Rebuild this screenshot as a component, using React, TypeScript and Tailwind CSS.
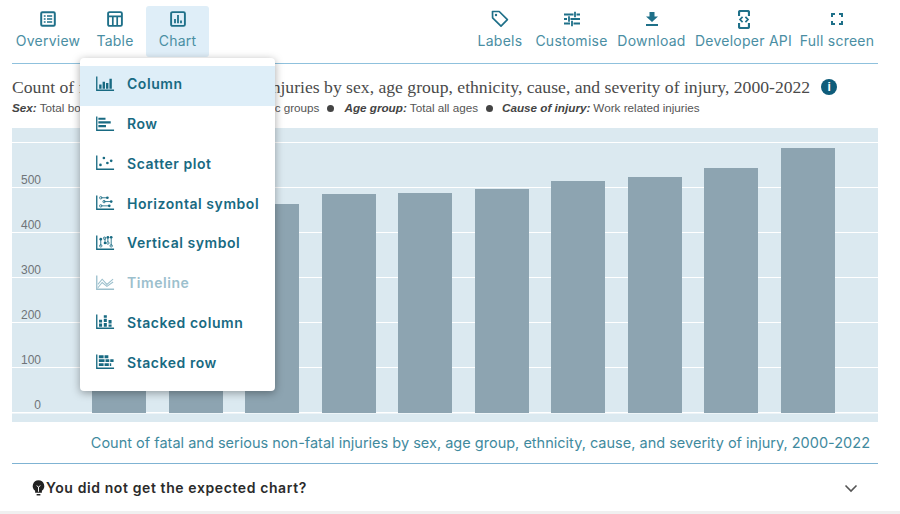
import React from "react";

const S = ({ children, w = 18, h = 18, vb = "0 0 18 18", cls = "" }: any) => (
  <svg width={w} height={h} viewBox={vb} className={cls} fill="none">{children}</svg>
);

const navC = "#1f7089";
const OverviewIcon = () => (
  <S w={16} h={16} vb="0 0 16 16">
    <rect x="1.2" y="1.2" width="13.6" height="13.6" rx="1.2" stroke={navC} strokeWidth="2" />
    <path d="M3.8 5h1.8M3.8 8h1.8M3.8 11h1.8M7 5h5.2M7 8h5.2M7 11h5.2" stroke={navC} strokeWidth="1.6" />
  </S>
);
const TableIcon = () => (
  <S w={16} h={16} vb="0 0 16 16">
    <rect x="1.1" y="1.1" width="13.8" height="13.8" rx="1.4" stroke={navC} strokeWidth="1.9" />
    <path d="M1 5.4h14M5.8 5.4V15M10.2 5.4V15" stroke={navC} strokeWidth="1.7" />
  </S>
);
const ChartIcon = () => (
  <S w={16} h={16} vb="0 0 16 16">
    <rect x="1.1" y="1.1" width="13.8" height="13.8" rx="1.4" stroke={navC} strokeWidth="1.9" />
    <path d="M5 12.2V8M8 12.2V4M11 12.2V9.5" stroke={navC} strokeWidth="1.8" />
  </S>
);
const LabelIcon = () => (
  <S w={18} h={18} vb="0 0 18 18">
    <path d="M1.5 1.5h6.7l8.2 8.2-6.4 6.4-8.4-8.3z" stroke={navC} strokeWidth="1.7" strokeLinejoin="round" />
    <circle cx="5" cy="5" r="1.2" fill={navC} />
  </S>
);
const SlidersIcon = () => (
  <S w={16} h={16} vb="0 0 16 16">
    <path d="M0 3.5h9.5M12.5 3.5H16M0 8h3M6.5 8H16M0 12.5h6M9.5 12.5H16M11 .8v5.4M5 5.3v5.4M8 9.8v5.4" stroke={navC} strokeWidth="1.8" />
  </S>
);
const DownloadIcon = () => (
  <S w={14} h={14} vb="0 0 14 14">
    <path d="M4.5 0h5v4.5H13L7 10 1 4.5h3.5z" fill={navC} />
    <rect x="1" y="12" width="12" height="2" fill={navC} />
  </S>
);
const ApiIcon = () => (
  <S w={12} h={19} vb="0 0 12 19">
    <path d="M1 6V2.5A1.5 1.5 0 0 1 2.5 1h7A1.5 1.5 0 0 1 11 2.5V6M1 13v3.5A1.5 1.5 0 0 0 2.5 18h7a1.5 1.5 0 0 0 1.5-1.5V13" stroke={navC} strokeWidth="2.2" />
    <path d="M4.6 6.8 2 9.5l2.6 2.7M7.4 6.8 10 9.5l-2.6 2.7" stroke={navC} strokeWidth="1.7" />
  </S>
);
const FullIcon = () => (
  <S w={12} h={12} vb="0 0 12 12">
    <path d="M1 4V1h3M8 1h3v3M11 8v3H8M4 11H1V8" stroke={navC} strokeWidth="2" />
  </S>
);

const axis = "M.8 0v14.6H19";
const MI = ({ c, children }: { c: string; children?: React.ReactNode }) => (
  <S w={20} h={16} vb="0 0 20 16">
    <path d={axis} stroke={c} strokeWidth="1.4" />
    {children}
  </S>
);
const menuIcons: Record<string, (c: string) => React.ReactNode> = {
  Column: (c) => (
    <MI c={c}>
      <path d="M4.6 13V8.5M8.2 13V5.5M11.8 13V7M15.4 13V2.5" stroke={c} strokeWidth="2.5" />
    </MI>
  ),
  Row: (c) => (
    <MI c={c}>
      <path d="M2.5 2.5h7.5M2.5 6.3h13M2.5 10.2h8" stroke={c} strokeWidth="2.3" />
    </MI>
  ),
  "Scatter plot": (c) => (
    <MI c={c}>
      {[[8.3, 2.7], [4.7, 10], [12, 8], [16, 5.7]].map(([x, y]) => (
        <circle key={x} cx={x} cy={y} r="1.4" fill={c} />
      ))}
    </MI>
  ),
  "Horizontal symbol": (c) => (
    <MI c={c}>
      <path d="M5 2.5h7M8 6.5h8M5 11h9" stroke={c} strokeWidth="0.9" />
      <circle cx="5" cy="2.5" r="1.3" stroke={c} strokeWidth="0.8" />
      <circle cx="12" cy="2.5" r="1.4" fill={c} />
      <circle cx="8.5" cy="6.5" r="1.3" stroke={c} strokeWidth="0.8" />
      <circle cx="16" cy="6.5" r="1.4" fill={c} />
      <circle cx="5" cy="11" r="1.3" stroke={c} strokeWidth="0.8" />
      <circle cx="14" cy="11" r="1.4" fill={c} />
    </MI>
  ),
  "Vertical symbol": (c) => (
    <MI c={c}>
      <path d="M5 3v8M9.5 2v5M12.5 2v5M16 3v8" stroke={c} strokeWidth="0.9" />
      <circle cx="5" cy="4" r="1.4" fill={c} />
      <circle cx="5" cy="11" r="1.3" stroke={c} strokeWidth="0.8" />
      <circle cx="9" cy="3" r="1.3" stroke={c} strokeWidth="0.8" />
      <circle cx="9.5" cy="8" r="1.4" fill={c} />
      <circle cx="12.5" cy="8" r="1.3" stroke={c} strokeWidth="0.8" />
      <circle cx="12.5" cy="2" r="1.4" fill={c} />
      <circle cx="16" cy="2" r="1.4" fill={c} />
      <circle cx="16" cy="11" r="1.3" stroke={c} strokeWidth="0.8" />
    </MI>
  ),
  Timeline: (c) => (
    <MI c={c}>
      <path d="M2 9.5 6.5 4l5 5.5L18 4M2 13l4.5-5.5 5 4L18 7" stroke={c} strokeWidth="1.1" />
    </MI>
  ),
  "Stacked column": (c) => (
    <MI c={c}>
      <path d="M4.8 13V9.6M4.8 8.6V5.5M9.8 13V9M9.8 8V4.6M9.8 3.6V.8M14.8 13V10.5M14.8 9.5V6" stroke={c} strokeWidth="3.2" />
    </MI>
  ),
  "Stacked row": (c) => (
    <MI c={c}>
      <path d="M3 2.5h5M9 2.5h4M3 6.6h6M10 6.6h4M15 6.6h3.5M3 10.8h5M9 10.8h4.5M14.5 10.8h1.5" stroke={c} strokeWidth="3" />
    </MI>
  ),
};

const menu = ["Column", "Row", "Scatter plot", "Horizontal symbol", "Vertical symbol", "Timeline", "Stacked column", "Stacked row"];
const bars = [
  [92, 330], [169, 300], [245, 204], [322, 194], [398, 193], [475, 189], [551, 181], [628, 177], [704, 168], [781, 148],
];
const ticks = [[0, 412.5], [100, 367.5], [200, 322.5], [300, 277.5], [400, 232.5], [500, 187.5]];

const NavItem = ({ icon, label, active = false, w }: { icon: React.ReactNode; label: string; active?: boolean; w: string }) => (
  <div className={`flex h-[51px] ${w} flex-col items-center rounded-[3px] whitespace-nowrap ${active ? "bg-[#dfeef8]" : ""}`}>
    <div className="flex h-[26px] items-center justify-center">{icon}</div>
    <span className="text-[14px] leading-[18px] tracking-[0.25px] text-[#4a8ea3]">{label}</span>
  </div>
);

export default function App() {
  return (
    <div className="relative h-[514px] w-[900px] overflow-hidden bg-white font-['Inter',sans-serif]">
      <div className="pl-3 pr-[22px] pt-1.5">
        <div className="flex h-[58px] items-start justify-between border-b border-[#8fc1dd] pb-[6px]">
          <div className="flex">
            <NavItem icon={<OverviewIcon />} label="Overview" w="w-[72px]" />
            <NavItem icon={<TableIcon />} label="Table" w="w-[62px]" />
            <NavItem icon={<ChartIcon />} label="Chart" active w="w-[63px]" />
          </div>
          <div className="flex pr-[1px]">
            <NavItem icon={<LabelIcon />} label="Labels" w="w-[60px]" />
            <NavItem icon={<SlidersIcon />} label="Customise" w="w-[83px]" />
            <NavItem icon={<DownloadIcon />} label="Download" w="w-[77px]" />
            <NavItem icon={<ApiIcon />} label="Developer API" w="w-[107px]" />
            <NavItem icon={<FullIcon />} label="Full screen" w="w-[80px]" />
          </div>
        </div>

        <div className="mt-[13px] flex h-[20px] items-center whitespace-nowrap font-['Liberation_Serif',serif] text-[17.65px] text-[#4a4a4a]">
          <span>Count of fatal and serious non-fatal injuries by sex, age group, ethnicity, cause, and severity of injury, 2000-2022</span>
          <span className="ml-[11px] flex h-[16px] w-[16px] items-center justify-center rounded-full bg-[#0e5c7a] font-['Liberation_Sans',sans-serif] text-[12px] font-bold leading-none text-white">i</span>
        </div>
        <div className="mt-[3px] flex h-[16px] items-center whitespace-nowrap font-['Liberation_Sans',sans-serif] text-[11.7px] text-[#555]">
          <b className="italic text-[#444]">Sex:</b>
          <span className="ml-[3px]">Total both sexes</span>
          <span className="ml-[9px] mr-[10px] h-[7px] w-[7px] rounded-full bg-[#444]" />
          <b className="italic text-[#444]">Ethnicity:</b>
          <span className="ml-[3px]">Total all ethnic groups</span>
          <span className="ml-[8px] mr-[10px] h-[7px] w-[7px] rounded-full bg-[#444]" />
          <b className="italic text-[#444]">Age group:</b>
          <span className="ml-[3px]">Total all ages</span>
          <span className="ml-[8px] mr-[9px] h-[7px] w-[7px] rounded-full bg-[#444]" />
          <b className="italic text-[#444]">Cause of injury:</b>
          <span className="ml-[3px]">Work related injuries</span>
        </div>

        <div className="mt-[12px] h-[294px] bg-[#dbe9f0]">
          <svg width="866" height="294" viewBox="12 128 866 294" className="block">
            {[142.5, ...ticks.map((t) => t[1])].map((y) => (
              <rect key={y} x="12" y={y - 0.5} width="866" height="1" fill="#fff" />
            ))}
            <rect x="12" y="412" width="866" height="1.5" fill="#fff" />
            {bars.map(([x, top]) => (
              <rect key={x} x={x} y={top} width="54" height={413 - top} fill="#8da4b1" />
            ))}
            {ticks.map(([v, y]) => (
              <text key={v} x="41" y={y - 4} textAnchor="end" fontSize="12" fill="#6f7478" fontFamily="'Liberation Sans',sans-serif">
                {v}
              </text>
            ))}
          </svg>
        </div>

        <div className="mt-[12px] flex h-[18px] items-center justify-end whitespace-nowrap pr-[8px] text-[14.5px] tracking-[0.01px] text-[#3f8a9e]">
          Count of fatal and serious non-fatal injuries by sex, age group, ethnicity, cause, and severity of injury, 2000-2022
        </div>
        <div className="mt-[11px] flex h-[49px] items-center justify-between border-t border-[#7fb3d3] pl-[19px] pr-[20px]">
          <div className="flex items-center pb-[2px] text-[14px] font-semibold tracking-[0.6px] text-[#2b2b2b]">
            <svg width="15" height="17" viewBox="0 0 16 17" fill="none">
              <path d="M8 .8a6.2 6.2 0 0 0-3.6 11.2v2.2h7.2V12A6.2 6.2 0 0 0 8 .8z" fill="#222" />
              <path d="M6 16.2h4" stroke="#222" strokeWidth="1.6" />
              <path d="M6 6.5 8 8l2-1.5M8 8v5" stroke="#fff" strokeWidth="1" />
            </svg>
            You did not get the expected chart?
          </div>
          <svg width="14" height="9" viewBox="0 0 14 9" fill="none">
            <path d="M1.5 1.5 7 7l5.5-5.5" stroke="#555" strokeWidth="1.6" />
          </svg>
        </div>
      </div>
      <div className="absolute bottom-0 left-0 h-[3px] w-full bg-[#f0f0f0]" />

      <div className="absolute left-[80px] top-[58px] w-[195px] rounded-[4px] bg-white pb-[7px] pt-2 shadow-[0_2px_8px_rgba(0,0,0,0.35)]">
        {menu.map((m, i) => {
          const disabled = m === "Timeline";
          const c = disabled ? "#9cc0cd" : "#186a82";
          return (
            <div
              key={m}
              className={`flex h-[39.75px] items-center pb-[4px] pl-[16px] text-[14px] font-semibold tracking-[0.55px] ${i === 0 ? "bg-[#deeef8]" : ""} ${disabled ? "text-[#9cc0cd]" : "text-[#186a82]"}`}
            >
              <span className="mr-[12px] flex w-[19px]">{menuIcons[m](c)}</span>
              {m}
            </div>
          );
        })}
      </div>
    </div>
  );
}
